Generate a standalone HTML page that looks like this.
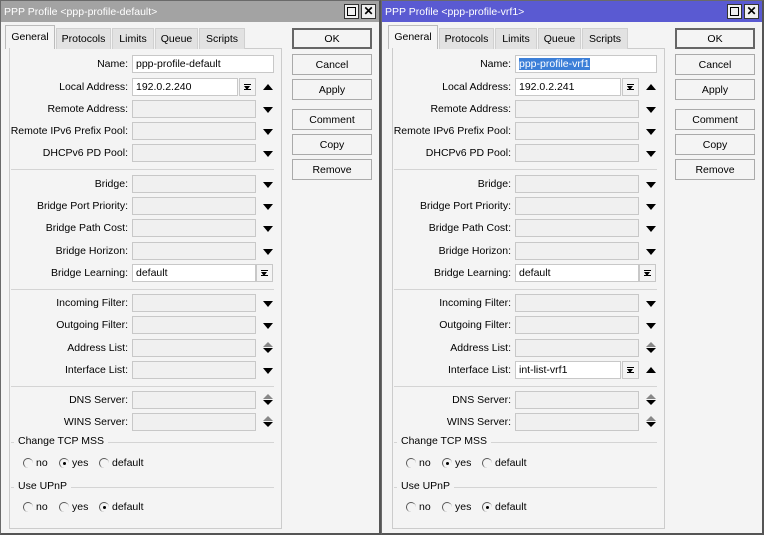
<!DOCTYPE html>
<html><head><meta charset="utf-8"><style>
*{margin:0;padding:0;box-sizing:border-box}
body{width:766px;height:537px;background:#fff;position:relative;overflow:hidden;font-family:"Liberation Sans",sans-serif;font-size:10.5px;color:#000}
.w{position:absolute;top:0;height:535px;background:#f4f4f4;border:1px solid #6a6a6a;border-right:2px solid #555;border-bottom:2px solid #555}
.t{position:absolute;left:0;right:0;top:0;height:21px;color:#fff;font-size:10.5px;padding:5px 0 0 3px}
.tb{position:absolute;top:3px;width:15px;height:15px;background:#f0f0f0;border:1px solid #333}
.tab{position:absolute;top:27px;height:21px;background:#e2e2e2;border:1px solid #d0d0d0;border-bottom:none;padding:4px 0 0 0;text-align:center}
.tab.s{background:#f4f4f4;top:24px;height:24px;border-color:#bbb;padding-top:5px}
.p{position:absolute;left:8px;top:47px;width:273px;height:481px;border:1px solid #ccc;border-top-color:#ddd}
.l{position:absolute;left:0;width:127px;text-align:right}
.i{position:absolute;left:131px;width:124px;height:18px;border:1px solid #c8c8c8;background:#f0f0f0;padding:2px 3px}
.i.f{background:#fff}
.b{position:absolute;width:17px;height:18px;border:1px solid #c8c8c8;background:#f4f4f4}
.b:after{content:"";position:absolute;left:4px;top:5px;width:7px;height:1px;background:#000;box-shadow:0 5px 0 #000}
.b:before{content:"";position:absolute;left:4px;top:7px;border-left:3.5px solid transparent;border-right:3.5px solid transparent;border-top:4px solid #000}
.d{position:absolute;left:262px;width:0;height:0;border-left:5px solid transparent;border-right:5px solid transparent;border-top:6px solid #000}
.u{position:absolute;left:262px;width:0;height:0;border-left:5px solid transparent;border-right:5px solid transparent;border-bottom:6px solid #000}
.sp{position:absolute;left:262px;width:10px;height:12px}
.sp:before{content:"";position:absolute;top:0;left:0;border-left:5px solid transparent;border-right:5px solid transparent;border-bottom:5px solid #888}
.sp:after{content:"";position:absolute;top:6px;left:0;border-left:5px solid transparent;border-right:5px solid transparent;border-top:5px solid #000}
.hr{position:absolute;left:10px;width:263px;height:1px;background:#d4d4d4}
.g{position:absolute;left:10px;width:263px;height:1px;background:#d4d4d4}
.gl{position:absolute;left:13px;background:#f4f4f4;padding:0 4px}
.r{position:absolute;width:10px;height:10px;border-radius:50%;border-left:1px solid #555;border-top:1px solid #555}
.r.c:after{content:"";position:absolute;left:3px;top:3px;width:3px;height:3px;border-radius:50%;background:#000}
.rt{position:absolute}
.btn{position:absolute;left:291px;width:80px;height:21px;border:1px solid #aaa;background:#f4f4f4;text-align:center;padding-top:4px}
.btn.ok{border:2px solid #666;padding-top:3px}
.sel{background:#3c7fd8;color:#fff}
</style></head><body>

<!-- LEFT WINDOW -->
<div class="w" style="left:0;width:381px">
<div class="t" style="background:#a3a3a3">PPP Profile &lt;ppp-profile-default&gt;</div>
<div class="tb" style="left:343px"><div style="position:absolute;left:2px;top:2px;width:9px;height:9px;border:1px solid #000"></div></div>
<div class="tb" style="left:360px;font-weight:bold;font-size:12px;line-height:13px;text-align:center">✕</div>
<div class="tab s" style="left:4px;width:50px">General</div>
<div class="tab" style="left:55px;width:55px">Protocols</div>
<div class="tab" style="left:111px;width:42px">Limits</div>
<div class="tab" style="left:154px;width:43px">Queue</div>
<div class="tab" style="left:198px;width:46px">Scripts</div>
<div class="p" style="border-top:none"></div>
<div style="position:absolute;left:244px;top:47px;width:37px;height:1px;background:#ccc"></div>

<div class="l" style="top:57px">Name:</div><div class="i f" style="top:54px;width:142px">ppp-profile-default</div>
<div class="l" style="top:80px">Local Address:</div><div class="i f" style="top:77px;width:106px">192.0.2.240</div><div class="b" style="left:238px;top:77px"></div><div class="u" style="top:83px"></div>
<div class="l" style="top:102px">Remote Address:</div><div class="i" style="top:99px"></div><div class="d" style="top:106px"></div>
<div class="l" style="top:124px">Remote IPv6 Prefix Pool:</div><div class="i" style="top:121px"></div><div class="d" style="top:128px"></div>
<div class="l" style="top:146px">DHCPv6 PD Pool:</div><div class="i" style="top:143px"></div><div class="d" style="top:150px"></div>
<div class="hr" style="top:168px"></div>
<div class="l" style="top:177px">Bridge:</div><div class="i" style="top:174px"></div><div class="d" style="top:181px"></div>
<div class="l" style="top:199px">Bridge Port Priority:</div><div class="i" style="top:196px"></div><div class="d" style="top:203px"></div>
<div class="l" style="top:221px">Bridge Path Cost:</div><div class="i" style="top:218px"></div><div class="d" style="top:225px"></div>
<div class="l" style="top:244px">Bridge Horizon:</div><div class="i" style="top:241px"></div><div class="d" style="top:248px"></div>
<div class="l" style="top:266px">Bridge Learning:</div><div class="i f" style="top:263px">default</div><div class="b" style="left:255px;top:263px"></div>
<div class="hr" style="top:288px"></div>
<div class="l" style="top:296px">Incoming Filter:</div><div class="i" style="top:293px"></div><div class="d" style="top:300px"></div>
<div class="l" style="top:318px">Outgoing Filter:</div><div class="i" style="top:315px"></div><div class="d" style="top:322px"></div>
<div class="l" style="top:341px">Address List:</div><div class="i" style="top:338px"></div><div class="sp" style="top:341px"></div>
<div class="l" style="top:363px">Interface List:</div><div class="i" style="top:360px"></div><div class="d" style="top:367px"></div>
<div class="hr" style="top:385px"></div>
<div class="l" style="top:393px">DNS Server:</div><div class="i" style="top:390px"></div><div class="sp" style="top:393px"></div>
<div class="l" style="top:415px">WINS Server:</div><div class="i" style="top:412px"></div><div class="sp" style="top:415px"></div>
<div class="g" style="top:441px"></div><div class="gl" style="top:434px">Change TCP MSS</div>
<div class="r" style="left:22px;top:457px"></div><div class="rt" style="left:35px;top:456px">no</div>
<div class="r c" style="left:58px;top:457px"></div><div class="rt" style="left:71px;top:456px">yes</div>
<div class="r" style="left:98px;top:457px"></div><div class="rt" style="left:111px;top:456px">default</div>
<div class="g" style="top:486px"></div><div class="gl" style="top:479px">Use UPnP</div>
<div class="r" style="left:22px;top:501px"></div><div class="rt" style="left:35px;top:500px">no</div>
<div class="r" style="left:58px;top:501px"></div><div class="rt" style="left:71px;top:500px">yes</div>
<div class="r c" style="left:98px;top:501px"></div><div class="rt" style="left:111px;top:500px">default</div>

<div class="btn ok" style="top:27px">OK</div>
<div class="btn" style="top:53px">Cancel</div>
<div class="btn" style="top:78px">Apply</div>
<div class="btn" style="top:108px">Comment</div>
<div class="btn" style="top:133px">Copy</div>
<div class="btn" style="top:158px">Remove</div>
</div>

<!-- RIGHT WINDOW -->
<div class="w" style="left:381px;width:383px">
<div class="t" style="background:#5a5ad2">PPP Profile &lt;ppp-profile-vrf1&gt;</div>
<div class="tb" style="left:345px"><div style="position:absolute;left:2px;top:2px;width:9px;height:9px;border:1px solid #000"></div></div>
<div class="tb" style="left:362px;font-weight:bold;font-size:12px;line-height:13px;text-align:center">✕</div>
<div class="tab s" style="left:6px;width:50px">General</div>
<div class="tab" style="left:57px;width:55px">Protocols</div>
<div class="tab" style="left:113px;width:42px">Limits</div>
<div class="tab" style="left:156px;width:43px">Queue</div>
<div class="tab" style="left:200px;width:46px">Scripts</div>
<div class="p" style="left:10px;border-top:none"></div>
<div style="position:absolute;left:246px;top:47px;width:37px;height:1px;background:#ccc"></div>
<div style="position:absolute;left:2px;top:0;width:380px;height:535px">
<div class="l" style="top:57px">Name:</div><div class="i f" style="top:54px;width:142px"><span class="sel">ppp-profile-vrf1</span></div>
<div class="l" style="top:80px">Local Address:</div><div class="i f" style="top:77px;width:106px">192.0.2.241</div><div class="b" style="left:238px;top:77px"></div><div class="u" style="top:83px"></div>
<div class="l" style="top:102px">Remote Address:</div><div class="i" style="top:99px"></div><div class="d" style="top:106px"></div>
<div class="l" style="top:124px">Remote IPv6 Prefix Pool:</div><div class="i" style="top:121px"></div><div class="d" style="top:128px"></div>
<div class="l" style="top:146px">DHCPv6 PD Pool:</div><div class="i" style="top:143px"></div><div class="d" style="top:150px"></div>
<div class="hr" style="top:168px"></div>
<div class="l" style="top:177px">Bridge:</div><div class="i" style="top:174px"></div><div class="d" style="top:181px"></div>
<div class="l" style="top:199px">Bridge Port Priority:</div><div class="i" style="top:196px"></div><div class="d" style="top:203px"></div>
<div class="l" style="top:221px">Bridge Path Cost:</div><div class="i" style="top:218px"></div><div class="d" style="top:225px"></div>
<div class="l" style="top:244px">Bridge Horizon:</div><div class="i" style="top:241px"></div><div class="d" style="top:248px"></div>
<div class="l" style="top:266px">Bridge Learning:</div><div class="i f" style="top:263px">default</div><div class="b" style="left:255px;top:263px"></div>
<div class="hr" style="top:288px"></div>
<div class="l" style="top:296px">Incoming Filter:</div><div class="i" style="top:293px"></div><div class="d" style="top:300px"></div>
<div class="l" style="top:318px">Outgoing Filter:</div><div class="i" style="top:315px"></div><div class="d" style="top:322px"></div>
<div class="l" style="top:341px">Address List:</div><div class="i" style="top:338px"></div><div class="sp" style="top:341px"></div>
<div class="l" style="top:363px">Interface List:</div><div class="i f" style="top:360px;width:106px">int-list-vrf1</div><div class="b" style="left:238px;top:360px"></div><div class="u" style="top:366px"></div>
<div class="hr" style="top:385px"></div>
<div class="l" style="top:393px">DNS Server:</div><div class="i" style="top:390px"></div><div class="sp" style="top:393px"></div>
<div class="l" style="top:415px">WINS Server:</div><div class="i" style="top:412px"></div><div class="sp" style="top:415px"></div>
<div class="g" style="top:441px"></div><div class="gl" style="top:434px">Change TCP MSS</div>
<div class="r" style="left:22px;top:457px"></div><div class="rt" style="left:35px;top:456px">no</div>
<div class="r c" style="left:58px;top:457px"></div><div class="rt" style="left:71px;top:456px">yes</div>
<div class="r" style="left:98px;top:457px"></div><div class="rt" style="left:111px;top:456px">default</div>
<div class="g" style="top:486px"></div><div class="gl" style="top:479px">Use UPnP</div>
<div class="r" style="left:22px;top:501px"></div><div class="rt" style="left:35px;top:500px">no</div>
<div class="r" style="left:58px;top:501px"></div><div class="rt" style="left:71px;top:500px">yes</div>
<div class="r c" style="left:98px;top:501px"></div><div class="rt" style="left:111px;top:500px">default</div>
<div class="btn ok" style="top:27px">OK</div>
<div class="btn" style="top:53px">Cancel</div>
<div class="btn" style="top:78px">Apply</div>
<div class="btn" style="top:108px">Comment</div>
<div class="btn" style="top:133px">Copy</div>
<div class="btn" style="top:158px">Remove</div>
</div>
</div>
</body></html>
